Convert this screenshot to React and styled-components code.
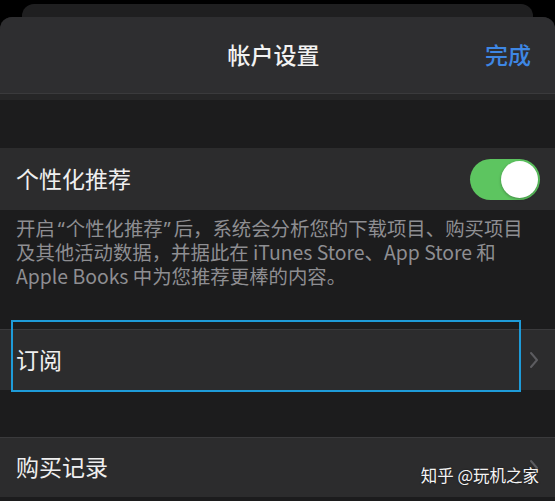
import React from "react";
import styled, { createGlobalStyle } from "styled-components";

const Global = createGlobalStyle`
  html, body { margin: 0; padding: 0; background: #000; }
  body { font-family: "Noto Sans CJK SC", "Noto Sans", sans-serif; }
`;

const Screen = styled.div`
  position: relative;
  width: 555px;
  height: 501px;
  overflow: hidden;
  background: #000;
`;

const BackCard = styled.div`
  margin: 4px 22px 0;
  height: 13px;
  border-radius: 12px 12px 0 0;
  background: #1f1f20;
`;

const Sheet = styled.div`
  border-radius: 12px 12px 0 0;
  background: #1c1c1d;
  overflow: hidden;
  height: 484px;
`;

const NavBar = styled.div`
  height: 76px;
  display: grid;
  grid-template-columns: 1fr auto 1fr;
  align-items: center;
  padding: 0 24px 0 16px;
  background: #2e2e30;
  border-bottom: 1px solid #3a3a3c;
`;

const NavBand = styled.div`
  height: 6px;
  background: #262627;
`;

const Title = styled.div`
  grid-column: 2;
  color: #f2f2f2;
  font-size: 23px;
  font-weight: 500;
  margin-top: -2px;
`;

const Done = styled.div`
  justify-self: end;
  color: #3e87e4;
  font-size: 23px;
  font-weight: 500;
  margin-top: -2px;
`;

const Gap = styled.div`
  height: ${(p) => p.$h}px;
`;

const Row = styled.div`
  height: ${(p) => p.$h || 62}px;
  display: flex;
  align-items: center;
  justify-content: space-between;
  padding: 0 15px 0 16px;
  background: #2c2c2d;
  border-top: 1px solid ${(p) => (p.$line ? "#3a3a3c" : "transparent")};
  box-sizing: border-box;
`;

const RowLabel = styled.span`
  color: #efefef;
  font-size: 23px;
  line-height: 1;
  margin-top: -2px;
`;

const Track = styled.div`
  width: 70px;
  height: 41px;
  border-radius: 21px;
  background: #5dc560;
  display: flex;
  align-items: center;
  justify-content: flex-end;
  padding: 2px;
  box-sizing: border-box;
`;

const Thumb = styled.div`
  width: 37px;
  height: 37px;
  border-radius: 50%;
  background: #fff;
  box-shadow: 0 1px 3px rgba(0, 0, 0, 0.3);
`;

const Footer = styled.div`
  padding: 6px 16px 0;
  height: 119px;
  box-sizing: border-box;
  color: #8e8e92;
  font-size: 19.4px;
  line-height: 24px;
  white-space: nowrap;
`;

const FooterLine = styled.div`
  height: 24px;
`;

const Quote = styled.span`
  font-family: "Noto Sans", sans-serif;
  padding: ${(p) => (p.$open ? "0 1px 0 3px" : "0 3px 0 1px")};
`;

const Chevron = styled.svg`
  width: 10px;
  height: 18px;
  margin-right: 1px;
`;

const Highlight = styled.div`
  position: absolute;
  left: 11px;
  top: 320px;
  width: 510px;
  height: 72px;
  border: 2px solid #1e9bd8;
  box-sizing: border-box;
  pointer-events: none;
`;

const Watermark = styled.div`
  position: absolute;
  right: 16px;
  bottom: 18px;
  color: #f4f4f4;
  font-size: 16.5px;
  line-height: 1;
  text-shadow: 0 0 2px rgba(0, 0, 0, 0.6);
`;

const ChevronIcon = () => (
  <Chevron viewBox="0 0 10 18">
    <path d="M2 2 L8 9 L2 16" fill="none" stroke="#5c5c60" strokeWidth="2" strokeLinecap="round" strokeLinejoin="round" />
  </Chevron>
);

export default function App() {
  return (
    <Screen>
      <Global />
      <BackCard />
      <Sheet>
        <NavBar>
          <Title>帐户设置</Title>
          <Done>完成</Done>
        </NavBar>
        <NavBand />
        <Gap $h={48} />
        <Row>
          <RowLabel>个性化推荐</RowLabel>
          <Track>
            <Thumb />
          </Track>
        </Row>
        <Footer>
          <FooterLine>
            开启<Quote $open>“</Quote>个性化推荐<Quote>”</Quote>后，系统会分析您的下载项目、购买项目
          </FooterLine>
          <FooterLine>及其他活动数据，并据此在 iTunes Store、App Store 和</FooterLine>
          <FooterLine>Apple Books 中为您推荐更棒的内容。</FooterLine>
        </Footer>
        <Row $h={61} $line>
          <RowLabel>订阅</RowLabel>
          <ChevronIcon />
        </Row>
        <Gap $h={47} />
        <Row $h={60} $line>
          <RowLabel>购买记录</RowLabel>
          <ChevronIcon />
        </Row>
      </Sheet>
      <Highlight />
      <Watermark>知乎 @玩机之家</Watermark>
    </Screen>
  );
}
